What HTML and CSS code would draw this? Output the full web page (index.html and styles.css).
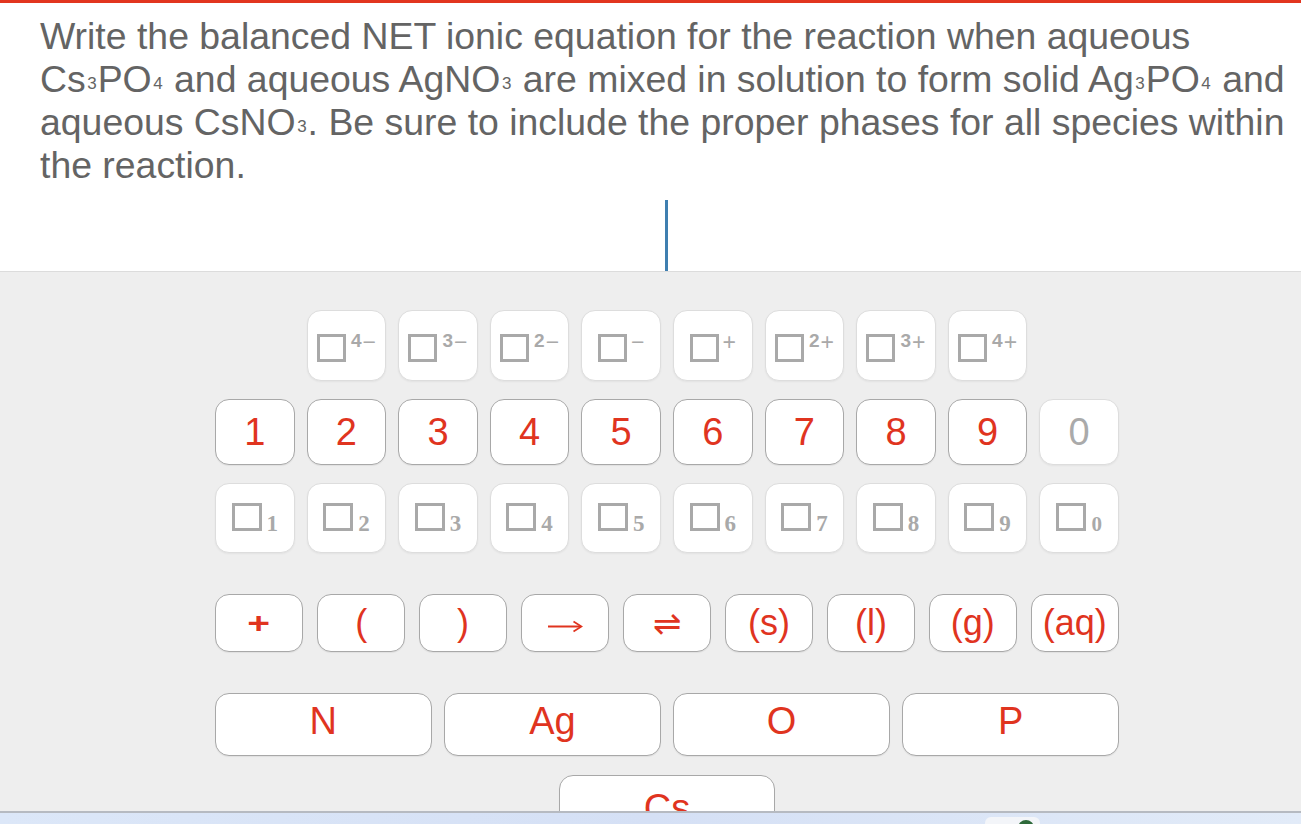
FILE: index.html
```html
<!DOCTYPE html>
<html lang="en">
<head>
<meta charset="utf-8">
<title>Net ionic equation</title>
<link rel="stylesheet" href="styles.css">
</head>
<body>
<div class="app">
  <div class="topbar"></div>
  <div class="question">
    <p>Write the balanced NET ionic equation for the reaction when aqueous Cs<sub>3</sub>PO<sub>4</sub> and aqueous AgNO<sub>3</sub> are mixed in solution to form solid Ag<sub>3</sub>PO<sub>4</sub> and aqueous CsNO<sub>3</sub>. Be sure to include the proper phases for all species within the reaction.</p>
  </div>
  <div class="answer"><span class="caret"></span></div>
  <div class="keyboard">
    <div class="pad">
      <div class="row row-10 row-charge">
        <div class="key soft"><span class="charge"><span class="box"></span><span class="cn">4</span><span class="sign">−</span></span></div>
        <div class="key soft"><span class="charge"><span class="box"></span><span class="cn">3</span><span class="sign">−</span></span></div>
        <div class="key soft"><span class="charge"><span class="box"></span><span class="cn">2</span><span class="sign">−</span></span></div>
        <div class="key soft"><span class="charge"><span class="box"></span><span class="sign solo">−</span></span></div>
        <div class="key soft"><span class="charge"><span class="box"></span><span class="sign solo">+</span></span></div>
        <div class="key soft"><span class="charge"><span class="box"></span><span class="cn">2</span><span class="sign">+</span></span></div>
        <div class="key soft"><span class="charge"><span class="box"></span><span class="cn">3</span><span class="sign">+</span></span></div>
        <div class="key soft"><span class="charge"><span class="box"></span><span class="cn">4</span><span class="sign">+</span></span></div>
      </div>
      <div class="row row-10 row-digit">
        <div class="key">1</div>
        <div class="key">2</div>
        <div class="key">3</div>
        <div class="key">4</div>
        <div class="key">5</div>
        <div class="key">6</div>
        <div class="key">7</div>
        <div class="key">8</div>
        <div class="key">9</div>
        <div class="key soft disabled">0</div>
      </div>
      <div class="row row-10 row-sub">
        <div class="key soft"><span class="subs"><span class="box"></span><span class="sn">1</span></span></div>
        <div class="key soft"><span class="subs"><span class="box"></span><span class="sn">2</span></span></div>
        <div class="key soft"><span class="subs"><span class="box"></span><span class="sn">3</span></span></div>
        <div class="key soft"><span class="subs"><span class="box"></span><span class="sn">4</span></span></div>
        <div class="key soft"><span class="subs"><span class="box"></span><span class="sn">5</span></span></div>
        <div class="key soft"><span class="subs"><span class="box"></span><span class="sn">6</span></span></div>
        <div class="key soft"><span class="subs"><span class="box"></span><span class="sn">7</span></span></div>
        <div class="key soft"><span class="subs"><span class="box"></span><span class="sn">8</span></span></div>
        <div class="key soft"><span class="subs"><span class="box"></span><span class="sn">9</span></span></div>
        <div class="key soft"><span class="subs"><span class="box"></span><span class="sn zero">0</span></span></div>
      </div>
      <div class="row row-9 row-sym">
        <div class="key"><span class="plus">+</span></div>
        <div class="key">(</div>
        <div class="key">)</div>
        <div class="key"><svg class="arrow" width="36" height="14" viewBox="0 0 36 14" aria-label="→"><path d="M1 7.5H34" stroke="#e0341f" stroke-width="1.8" fill="none"/><path d="M26.5 2.5L34.5 7.5L26.5 12.5" stroke="#e0341f" stroke-width="1.8" fill="none" stroke-linejoin="miter"/></svg></div>
        <div class="key"><span class="eq">⇌</span></div>
        <div class="key">(s)</div>
        <div class="key">(l)</div>
        <div class="key">(g)</div>
        <div class="key">(aq)</div>
      </div>
      <div class="row row-4 row-el">
        <div class="key">N</div>
        <div class="key">Ag</div>
        <div class="key">O</div>
        <div class="key">P</div>
      </div>
      <div class="row row-1 row-el row-last">
        <div class="key">Cs</div>
      </div>
    </div>
  </div>
</div>
<div class="taskbar"><span class="tray"><span class="dot"></span></span></div>
</body>
</html>
```

FILE: styles.css
```css
html, body {
  margin: 0;
  padding: 0;
}
body {
  font-family: "Liberation Sans", Arial, sans-serif;
  background: #ffffff;
  height: 824px;
  overflow: hidden;
}
.app {
  height: 811px;
  overflow: hidden;
  display: flex;
  flex-direction: column;
}
.topbar {
  flex: none;
  height: 3px;
  background: #e2351f;
}
.question {
  flex: none;
  padding: 12px 8px 0 40px;
}
.question p {
  margin: 0;
  font-size: 37.4px;
  line-height: 43px;
  color: #646464;
}
.question sub {
  font-size: 17px;
  line-height: 0;
  vertical-align: 3px;
  margin: 0 1px 0 1.5px;
}
.answer {
  flex: none;
  height: 84px;
  padding-left: 665px;
  display: flex;
  align-items: flex-end;
}
.caret {
  width: 3px;
  height: 71px;
  background: #3f7fb0;
}
.keyboard {
  flex: 1;
  background: #eeeeee;
  border-top: 1px solid #dcdcdc;
  padding: 38px 0 0 215px;
}
.pad {
  width: 904px;
  display: flex;
  flex-direction: column;
}
.row {
  display: grid;
  column-gap: 12px;
}
.row-10 {
  grid-template-columns: repeat(10, 1fr);
}
.row-9 {
  grid-template-columns: repeat(9, 1fr);
  column-gap: 13.5px;
}
.row-4 {
  grid-template-columns: repeat(4, 1fr);
  column-gap: 12.5px;
}
.row-1 {
  grid-template-columns: 216px;
  justify-content: center;
}
.key {
  box-sizing: border-box;
  background: #ffffff;
  border: 1px solid #a8a8a8;
  border-radius: 14px;
  box-shadow: 0 1px 1px rgba(0, 0, 0, 0.06);
  display: flex;
  align-items: center;
  justify-content: center;
  color: #e0341f;
  font-size: 38px;
  line-height: 1;
}
.key.soft {
  border-color: #dddddd;
  box-shadow: 0 1px 2px rgba(0, 0, 0, 0.05);
}
.key.disabled {
  color: #aaaaaa;
}
.row-charge .key {
  height: 71px;
}
.row-charge .key:first-child {
  grid-column-start: 2;
}
.row-digit {
  margin-top: 18px;
}
.row-digit .key {
  height: 66px;
}
.row-sub {
  margin-top: 18px;
}
.row-sub .key {
  height: 70px;
}
.row-sym {
  margin-top: 41px;
}
.row-sym .key {
  height: 58px;
  font-size: 36px;
}
.row-el {
  margin-top: 41px;
}
.row-el .key {
  height: 63px;
  padding-bottom: 8px;
}
.row-last {
  margin-top: 19px;
}
.row-last .key {
  padding-bottom: 0;
  padding-top: 2px;
}

/* charge keys */
.charge {
  display: flex;
  align-items: flex-start;
  margin-top: 5px;
  color: #a9a9a9;
}
.box {
  display: inline-block;
  width: 23px;
  height: 22px;
  border: 3px solid #a9a9a9;
}
.cn {
  font-size: 19px;
  font-weight: bold;
  line-height: 14px;
  margin-left: 5px;
}
.sign {
  font-size: 23px;
  line-height: 16px;
  margin-left: 1px;
}
.sign.solo {
  margin-left: 4px;
}

/* subscript keys */
.subs {
  display: inline-block;
  line-height: 28px;
  margin-top: 4px;
  color: #a9a9a9;
}
.subs .box {
  width: 24px;
  height: 22px;
}
.sn {
  font-family: "Liberation Serif", "Times New Roman", serif;
  font-size: 23px;
  font-weight: bold;
  margin-left: 5px;
}
.sn.zero {
  font-size: 21px;
}

/* symbol keys */
.plus {
  font-size: 30px;
  font-weight: bold;
  display: inline-block;
  transform: scaleX(1.3);
}
.arrow {
  display: block;
  margin-top: 6px;
}
.eq {
  font-family: "DejaVu Sans", sans-serif;
  font-size: 34px;
}

/* bottom strip */
.taskbar {
  position: relative;
  height: 11px;
  border-top: 2px solid #b6bac1;
  background: linear-gradient(to right, #dce7f8, #d5e0f5 50%, #e2ebf8);
  overflow: hidden;
}
.tray {
  position: absolute;
  left: 985px;
  top: 4px;
  width: 55px;
  height: 12px;
  background: #f3f5f9;
  border-radius: 6px 6px 0 0;
}
.dot {
  position: absolute;
  left: 33px;
  top: 3px;
  width: 16px;
  height: 16px;
  border-radius: 50%;
  background: #2e6a3a;
}
```
